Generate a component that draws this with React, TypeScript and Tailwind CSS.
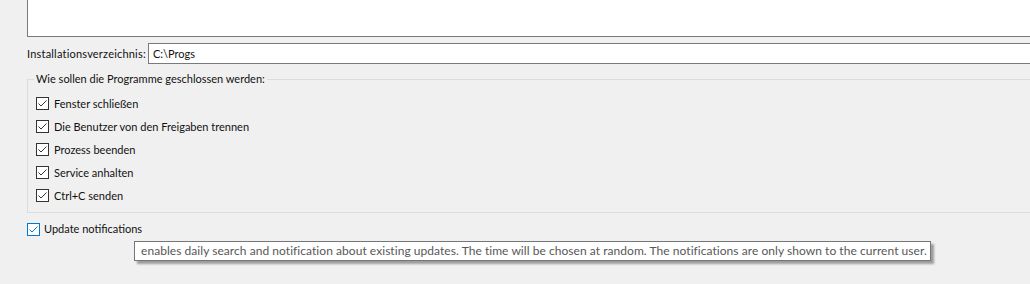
import React from 'react'

const font = { fontFamily: 'Lato, "Liberation Sans", sans-serif' }

function Check({ blue = false }: { blue?: boolean }) {
    return (
        <span
            className={
                'flex h-[13px] w-[13px] shrink-0 items-center justify-center border bg-white ' +
                (blue ? 'border-[#0078d7]' : 'border-[#333333]')
            }
        >
            <svg width="11" height="11" viewBox="0 0 11 11">
                <polyline
                    points="1.5,5.5 4,8 9.5,2.5"
                    fill="none"
                    stroke={blue ? '#0078d7' : '#333333'}
                    strokeWidth="1"
                />
            </svg>
        </span>
    )
}

function Row({ label }: { label: string }) {
    return (
        <div className="flex h-[23px] items-center gap-[5px]">
            <Check />
            <span>{label}</span>
        </div>
    )
}

export default function App() {
    const items = [
        'Fenster schließen',
        'Die Benutzer von den Freigaben trennen',
        'Prozess beenden',
        'Service anhalten',
        'Ctrl+C senden',
    ]

    return (
        <main
            className="relative h-[284px] w-[1030px] overflow-hidden whitespace-nowrap bg-[#f0f0f0] pl-[27px] text-[11px] leading-[16px] text-[#111111]"
            style={font}
        >
            <div className="-mr-[4px] h-[37px] border-b border-l border-[#7a7a7a] bg-white" />

            <div className="mt-[6px] flex items-center">
                <span className="w-[121px] tracking-[0.2px]">Installationsverzeichnis:</span>
                <div className="-mr-[4px] flex h-[21px] flex-1 items-center border border-[#7a7a7a] bg-white pl-[4px]">
                    C:\Progs
                </div>
            </div>

            <fieldset className="-mr-[4px] mt-[7px] border border-[#dcdcdc] pb-[5px] pl-[8px]">
                <legend className="-ml-[2px] px-[2px]">Wie sollen die Programme geschlossen werden:</legend>
                <div className="pt-[5px]">
                    {items.map((it) => (
                        <Row key={it} label={it} />
                    ))}
                </div>
            </fieldset>

            <div className="mt-[8px] flex items-center gap-[4px]">
                <Check blue />
                <span>Update notifications</span>
            </div>

            <div className="absolute left-[134px] top-[241px] flex h-[20px] w-[797px] items-center border border-[#767676] bg-white pl-[6px] text-[12px] tracking-[0.05px] text-[#575757] shadow-[3px_3px_2px_rgba(0,0,0,0.35)]">
                enables daily search and notification about existing updates. The time will be chosen at random. The notifications are only shown to the current user.
            </div>
        </main>
    )
}
